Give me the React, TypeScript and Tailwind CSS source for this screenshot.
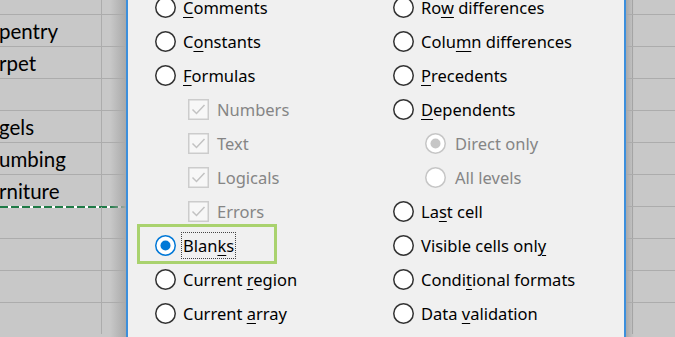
import type { ReactNode } from 'react'

type Row = { label: ReactNode; kind: 'radio' | 'check'; indent?: boolean; checked?: boolean; disabled?: boolean; focus?: boolean }

function Radio({ checked, disabled }: { checked?: boolean; disabled?: boolean }) {
  const stroke = disabled ? '#c6c6c6' : checked ? '#0078d7' : '#333333'
  const dot = disabled ? '#c6c6c6' : '#0078d7'
  return (
    <svg width="21" height="21" viewBox="0 0 21 21" className="shrink-0">
      <circle cx="10.5" cy="10.5" r="9.75" fill="#ffffff" stroke={stroke} strokeWidth="1.5" />
      {checked && <circle cx="10.5" cy="10.5" r="5" fill={dot} />}
    </svg>
  )
}

function Check() {
  return (
    <svg width="21" height="21" viewBox="0 0 21 21" className="shrink-0">
      <rect x="0.75" y="0.75" width="19.5" height="19.5" fill="#f7f7f7" stroke="#cccccc" strokeWidth="1.5" />
      <polyline points="4.5,10.5 8.5,14.5 16.5,6" fill="none" stroke="#c2c2c2" strokeWidth="1.5" />
    </svg>
  )
}

const u = (s: string) => <u className="underline decoration-1 underline-offset-[3px]">{s}</u>

const left: Row[] = [
  { label: <>{u('C')}omments</>, kind: 'radio' },
  { label: <>C{u('o')}nstants</>, kind: 'radio' },
  { label: <>{u('F')}ormulas</>, kind: 'radio' },
  { label: 'Numbers', kind: 'check', indent: true, disabled: true },
  { label: 'Text', kind: 'check', indent: true, disabled: true },
  { label: 'Logicals', kind: 'check', indent: true, disabled: true },
  { label: 'Errors', kind: 'check', indent: true, disabled: true },
  { label: <>Blan{u('k')}s</>, kind: 'radio', checked: true, focus: true },
  { label: <>Current {u('r')}egion</>, kind: 'radio' },
  { label: <>Current {u('a')}rray</>, kind: 'radio' },
  { label: <>O{u('b')}jects</>, kind: 'radio' },
]

const right: Row[] = [
  { label: <>Ro{u('w')} differences</>, kind: 'radio' },
  { label: <>Colu{u('m')}n differences</>, kind: 'radio' },
  { label: <>{u('P')}recedents</>, kind: 'radio' },
  { label: <>{u('D')}ependents</>, kind: 'radio' },
  { label: 'Direct only', kind: 'radio', indent: true, disabled: true, checked: true },
  { label: 'All levels', kind: 'radio', indent: true, disabled: true },
  { label: <>La{u('s')}t cell</>, kind: 'radio' },
  { label: <>Visible cells onl{u('y')}</>, kind: 'radio' },
  { label: <>Condi{u('t')}ional formats</>, kind: 'radio' },
  { label: <>Data {u('v')}alidation</>, kind: 'radio' },
  { label: 'All', kind: 'radio', indent: true, disabled: true },
]

function Option({ row, indent }: { row: Row; indent: string }) {
  return (
    <div className={`relative flex h-[34px] shrink-0 items-center ${row.indent ? indent : ''}`}>
      {row.kind === 'radio' ? <Radio checked={row.checked} disabled={row.disabled} /> : <Check />}
      {row.focus ? (
        <span className="ml-[5px] border border-dotted border-[#444] px-[1px] py-[1px] leading-[23px] text-black">
          {row.label}
        </span>
      ) : (
        <span
          className={`whitespace-nowrap leading-[23px] ${row.kind === 'check' ? 'ml-[8px]' : row.indent ? 'ml-[9px]' : 'ml-[7px]'} ${
            row.disabled ? 'text-[#858585]' : 'text-black'
          }`}
        >
          {row.label}
        </span>
      )}
      {row.focus && (
        <div className="pointer-events-none absolute left-[-18px] top-[-4px] h-[40px] w-[140px] border-[3px] border-[#a9d26e]" />
      )}
    </div>
  )
}

const leftCells = ['pentry', 'rpet', '', 'gels', 'umbing', 'rniture', '', '', '', '']

function Sheet({ side }: { side: 'left' | 'right' }) {
  const isLeft = side === 'left'
  return (
    <div
      className={`relative shrink-0 overflow-hidden bg-[#c8c8c8] font-['Lato',sans-serif] text-[20.5px] text-black ${
        isLeft ? 'w-[126px]' : 'flex-1'
      }`}
    >
      <div className="flex h-[14px]">
        <div className={isLeft ? 'w-[102px] border-r border-[#acacac]' : 'w-[7px] border-r border-[#a4a4a4]'} />
      </div>
      {leftCells.map((t, i) => (
        <div key={i} className="flex h-[32px] shrink-0 flex-col">
          {isLeft && i === 6 ? (
            <div className="h-[2px] -mb-[1px] bg-[repeating-linear-gradient(90deg,#1e7a46_0_8px,#ffffff_8px_11px)]" />
          ) : (
            <div className="h-[1px] bg-[#acacac]" />
          )}
          <div className="flex flex-1">
            <div
              className={`flex items-end overflow-hidden whitespace-nowrap leading-none ${
                isLeft ? 'w-[102px] border-r border-[#acacac] pb-[5px]' : 'w-[7px] border-r border-[#a4a4a4]'
              }`}
            >
              {isLeft && <span className="-ml-[1px]">{t}</span>}
            </div>
          </div>
        </div>
      ))}
      {isLeft ? (
        <div className="pointer-events-none absolute right-0 top-0 h-full w-[16px] bg-gradient-to-r from-transparent to-[#a9a9a9]" />
      ) : (
        <div className="pointer-events-none absolute left-0 top-0 h-full w-[8px] bg-gradient-to-l from-transparent to-[#a9a9a9]" />
      )}
    </div>
  )
}

export default function App() {
  return (
    <div className="flex h-[337px] w-[675px] overflow-hidden bg-[#f0f0f0]">
      <Sheet side="left" />
      <div className="flex w-[500px] shrink-0 border-x-2 border-[#3c8fdc] bg-[#f0f0f0] font-['Noto_Sans',sans-serif] text-[16.5px]">
        <div className="-mt-[10px] ml-[27px] flex w-[238px] shrink-0 flex-col">
          {left.map((r, i) => (
            <Option key={i} row={r} indent="ml-[33px]" />
          ))}
        </div>
        <div className="-mt-[10px] flex flex-col">
          {right.map((r, i) => (
            <Option key={i} row={r} indent="ml-[32px]" />
          ))}
        </div>
      </div>
      <Sheet side="right" />
    </div>
  )
}
